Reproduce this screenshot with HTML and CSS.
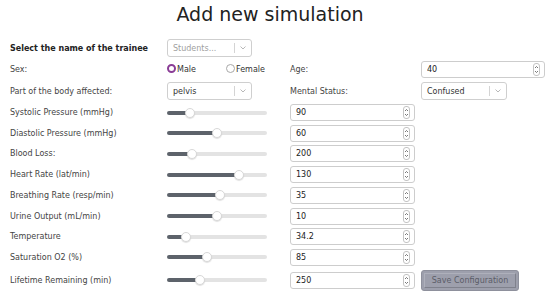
FILE: index.html
```html
<!DOCTYPE html>
<html lang="en">
<head>
  <meta charset="UTF-8" />
  <meta name="viewport" content="width=device-width, initial-scale=1.0"/>
  <title>Add new simulation</title>
  <link rel="stylesheet" href="styles.css">
</head>
<body>

  <h1 class="title">Add new simulation</h1>

  <form class="sim-form">
    <label class="field-label strong">Select the name of the trainee</label>
    <div class="select placeholder">
      <span class="val">Students...</span>
      <span class="sep"></span>
      <span class="chev"><svg width="6" height="4" viewBox="0 0 6 4"><polyline points="0.5,0.5 3,3 5.5,0.5" fill="none" stroke="#b8b8b8" stroke-width="1"/></svg></span>
    </div>

    <label class="field-label">Sex:</label>
    <div class="radios">
      <label class="radio"><input type="radio" name="sex" checked>Male</label>
      <label class="radio"><input type="radio" name="sex">Female</label>
    </div>
    <label class="field-label side">Age:</label>
    <div class="num top">
      <input type="text" value="40">
      <span class="spin"><svg width="7" height="13" viewBox="0 0 7 13"><rect x="0.5" y="0.5" width="6" height="12" rx="2.5" fill="#fff" stroke="#c4c4c4"/><polyline points="2,5 3.5,3.5 5,5" fill="none" stroke="#555" stroke-width="0.8"/><polyline points="2,8 3.5,9.5 5,8" fill="none" stroke="#555" stroke-width="0.8"/></svg></span>
    </div>

    <label class="field-label">Part of the body affected:</label>
    <div class="select">
      <span class="val">pelvis</span>
      <span class="sep"></span>
      <span class="chev"><svg width="6" height="4" viewBox="0 0 6 4"><polyline points="0.5,0.5 3,3 5.5,0.5" fill="none" stroke="#b8b8b8" stroke-width="1"/></svg></span>
    </div>
    <label class="field-label side">Mental Status:</label>
    <div class="select wide">
      <span class="val">Confused</span>
      <span class="sep"></span>
      <span class="chev"><svg width="6" height="4" viewBox="0 0 6 4"><polyline points="0.5,0.5 3,3 5.5,0.5" fill="none" stroke="#b8b8b8" stroke-width="1"/></svg></span>
    </div>

    <label class="field-label">Systolic Pressure (mmHg)</label>
    <input class="range" type="range" min="50" max="250" value="90" style="--v: 0.2">
    <div class="num">
      <input type="text" value="90">
      <span class="spin"><svg width="7" height="13" viewBox="0 0 7 13"><rect x="0.5" y="0.5" width="6" height="12" rx="2.5" fill="#fff" stroke="#c4c4c4"/><polyline points="2,5 3.5,3.5 5,5" fill="none" stroke="#555" stroke-width="0.8"/><polyline points="2,8 3.5,9.5 5,8" fill="none" stroke="#555" stroke-width="0.8"/></svg></span>
    </div>

    <label class="field-label">Diastolic Pressure (mmHg)</label>
    <input class="range" type="range" min="0" max="120" value="60" style="--v: 0.5">
    <div class="num">
      <input type="text" value="60">
      <span class="spin"><svg width="7" height="13" viewBox="0 0 7 13"><rect x="0.5" y="0.5" width="6" height="12" rx="2.5" fill="#fff" stroke="#c4c4c4"/><polyline points="2,5 3.5,3.5 5,5" fill="none" stroke="#555" stroke-width="0.8"/><polyline points="2,8 3.5,9.5 5,8" fill="none" stroke="#555" stroke-width="0.8"/></svg></span>
    </div>

    <label class="field-label">Blood Loss:</label>
    <input class="range" type="range" min="0" max="900" value="200" style="--v: 0.2222">
    <div class="num">
      <input type="text" value="200">
      <span class="spin"><svg width="7" height="13" viewBox="0 0 7 13"><rect x="0.5" y="0.5" width="6" height="12" rx="2.5" fill="#fff" stroke="#c4c4c4"/><polyline points="2,5 3.5,3.5 5,5" fill="none" stroke="#555" stroke-width="0.8"/><polyline points="2,8 3.5,9.5 5,8" fill="none" stroke="#555" stroke-width="0.8"/></svg></span>
    </div>

    <label class="field-label">Heart Rate (lat/min)</label>
    <input class="range" type="range" min="0" max="175" value="130" style="--v: 0.7429">
    <div class="num">
      <input type="text" value="130">
      <span class="spin"><svg width="7" height="13" viewBox="0 0 7 13"><rect x="0.5" y="0.5" width="6" height="12" rx="2.5" fill="#fff" stroke="#c4c4c4"/><polyline points="2,5 3.5,3.5 5,5" fill="none" stroke="#555" stroke-width="0.8"/><polyline points="2,8 3.5,9.5 5,8" fill="none" stroke="#555" stroke-width="0.8"/></svg></span>
    </div>

    <label class="field-label">Breathing Rate (resp/min)</label>
    <input class="range" type="range" min="0" max="65" value="35" style="--v: 0.5385">
    <div class="num">
      <input type="text" value="35">
      <span class="spin"><svg width="7" height="13" viewBox="0 0 7 13"><rect x="0.5" y="0.5" width="6" height="12" rx="2.5" fill="#fff" stroke="#c4c4c4"/><polyline points="2,5 3.5,3.5 5,5" fill="none" stroke="#555" stroke-width="0.8"/><polyline points="2,8 3.5,9.5 5,8" fill="none" stroke="#555" stroke-width="0.8"/></svg></span>
    </div>

    <label class="field-label">Urine Output (mL/min)</label>
    <input class="range" type="range" min="0" max="20" value="10" style="--v: 0.5">
    <div class="num">
      <input type="text" value="10">
      <span class="spin"><svg width="7" height="13" viewBox="0 0 7 13"><rect x="0.5" y="0.5" width="6" height="12" rx="2.5" fill="#fff" stroke="#c4c4c4"/><polyline points="2,5 3.5,3.5 5,5" fill="none" stroke="#555" stroke-width="0.8"/><polyline points="2,8 3.5,9.5 5,8" fill="none" stroke="#555" stroke-width="0.8"/></svg></span>
    </div>

    <label class="field-label">Temperature</label>
    <input class="range" type="range" min="32" max="46" step="0.1" value="34.2" style="--v: 0.1571">
    <div class="num">
      <input type="text" value="34.2">
      <span class="spin"><svg width="7" height="13" viewBox="0 0 7 13"><rect x="0.5" y="0.5" width="6" height="12" rx="2.5" fill="#fff" stroke="#c4c4c4"/><polyline points="2,5 3.5,3.5 5,5" fill="none" stroke="#555" stroke-width="0.8"/><polyline points="2,8 3.5,9.5 5,8" fill="none" stroke="#555" stroke-width="0.8"/></svg></span>
    </div>

    <label class="field-label">Saturation O2 (%)</label>
    <input class="range" type="range" min="60" max="124" value="85" style="--v: 0.3906">
    <div class="num">
      <input type="text" value="85">
      <span class="spin"><svg width="7" height="13" viewBox="0 0 7 13"><rect x="0.5" y="0.5" width="6" height="12" rx="2.5" fill="#fff" stroke="#c4c4c4"/><polyline points="2,5 3.5,3.5 5,5" fill="none" stroke="#555" stroke-width="0.8"/><polyline points="2,8 3.5,9.5 5,8" fill="none" stroke="#555" stroke-width="0.8"/></svg></span>
    </div>

    <label class="field-label">Lifetime Remaining (min)</label>
    <input class="range" type="range" min="0" max="800" value="250" style="--v: 0.3125">
    <div class="num">
      <input type="text" value="250">
      <span class="spin"><svg width="7" height="13" viewBox="0 0 7 13"><rect x="0.5" y="0.5" width="6" height="12" rx="2.5" fill="#fff" stroke="#c4c4c4"/><polyline points="2,5 3.5,3.5 5,5" fill="none" stroke="#555" stroke-width="0.8"/><polyline points="2,8 3.5,9.5 5,8" fill="none" stroke="#555" stroke-width="0.8"/></svg></span>
    </div>
    <button class="save-btn" type="button" disabled><span>Save Configuration</span></button>
  </form>

</body>
</html>
```

FILE: styles.css
```css
body {
  font-family: 'DejaVu Sans', Verdana, sans-serif;
  font-size: 8px;
  color: #444;
  background: #fff;
  margin: 0;
  padding: 0;
}

.title {
  font-size: 19px;
  font-weight: normal;
  color: #222;
  text-align: center;
  line-height: 23px;
  margin: 0 10px 13px 0;
  padding-top: 3px;
}

.sim-form {
  display: grid;
  grid-template-columns: 157px 123px 131px 124px;
  row-gap: 3.7px;
  align-items: center;
  padding: 0 5px 0 10px;
}

.field-label {
  grid-column: 1;
  color: #444;
  white-space: nowrap;
}

.field-label.side {
  grid-column: 3;
}

.field-label.strong {
  font-weight: bold;
  color: #222;
}

/* selects */
.select {
  display: flex;
  align-items: center;
  width: 85px;
  height: 18px;
  box-sizing: border-box;
  border: 1px solid #cfcfcf;
  border-radius: 3px;
  padding-left: 5px;
  color: #333;
  background: #fff;
}

.select.wide {
  width: 86px;
}

.select.placeholder {
  color: #a0a0a0;
}

.select .val {
  flex: 1;
}

.select .sep {
  width: 1px;
  height: 10px;
  background: #d4d4d4;
}

.select .chev {
  width: 16px;
  display: flex;
  justify-content: center;
}

/* radios */
.radios {
  display: grid;
  grid-template-columns: 59px 59px;
  height: 18px;
  align-items: center;
}

.radio {
  display: flex;
  align-items: center;
  color: #333;
}

.radio input {
  appearance: none;
  -webkit-appearance: none;
  width: 9px;
  height: 9px;
  margin: -3px 1px 0 0;
  border: 1px solid #a8a8a8;
  border-radius: 50%;
  box-sizing: border-box;
  background: #fff;
}

.radio input:checked {
  border: 2.5px solid #8a3d96;
}

/* number fields */
.num {
  display: flex;
  align-items: center;
  width: 125px;
  height: 17px;
  box-sizing: border-box;
  border: 1px solid #cdcdcd;
  border-radius: 3px;
  padding: 0 4px 0 5px;
  background: #fff;
}

.num.top {
  align-self: start;
  width: 124px;
}

.num input {
  flex: 1;
  min-width: 0;
  border: 0;
  padding: 0;
  font: inherit;
  color: #222;
  background: transparent;
  outline: none;
}

.spin {
  display: flex;
}

/* sliders */
.range {
  -webkit-appearance: none;
  appearance: none;
  width: 100px;
  height: 10px;
  margin: 0;
  background: transparent;
}

.range::-webkit-slider-runnable-track {
  height: 4px;
  border-radius: 2px;
  background: linear-gradient(to right, #5d636b 0, #5d636b calc(5px + var(--v) * (100% - 10px)), #e3e3e3 calc(5px + var(--v) * (100% - 10px)));
}

.range::-webkit-slider-thumb {
  -webkit-appearance: none;
  box-sizing: border-box;
  width: 10px;
  height: 10px;
  margin-top: -3px;
  border-radius: 50%;
  background: #fff;
  border: 1px solid #d8d8d8;
  box-shadow: 0 1px 1px rgba(0, 0, 0, 0.12);
}

/* button */
.save-btn {
  width: 98px;
  height: 21px;
  padding: 2px;
  border: 1px solid #8e909c;
  border-radius: 3px;
  background: #9d9fac;
  font: inherit;
  color: #5b5d68;
  cursor: default;
}

.save-btn span {
  display: block;
  height: 100%;
  box-sizing: border-box;
  line-height: 13px;
  border: 1px solid;
  border-color: #aeb0bb #7f818c #7f818c #aeb0bb;
}
```
